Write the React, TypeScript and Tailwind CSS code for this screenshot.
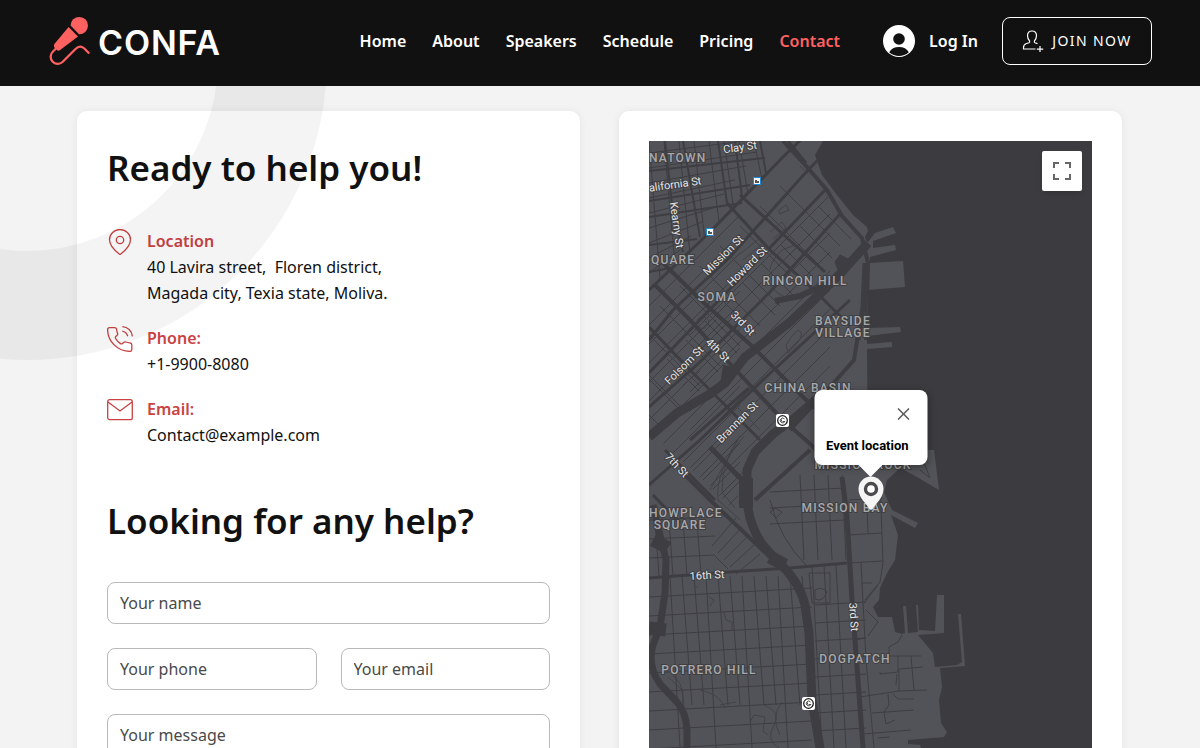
import type { ReactNode } from 'react';
import { X } from 'lucide-react';

const navLinks = ['Home', 'About', 'Speakers', 'Schedule', 'Pricing', 'Contact'];

const fieldClass =
	'w-full rounded-lg border border-[#b9b9b9] bg-white px-3 text-base text-[#333] placeholder:text-[#4a4a4a] placeholder:opacity-100 outline-none focus:border-[#111]';

export default function App() {
	return (
		<div className="relative min-h-screen overflow-hidden bg-[#f3f3f3] font-['Noto_Sans',sans-serif] text-[#111]">
			<Header />
			<main className="mx-auto grid max-w-[1110px] grid-cols-2 gap-[39px] pt-[25px] pr-[33px] pb-16 pl-8">
				<Card>
					<h1 className="text-[35px] leading-[54px] font-semibold">Ready to help you!</h1>
					<div className="mt-[33px] flex flex-col gap-[19px]">
						<ContactItem icon={<PinIcon />} title="Location">
							<p>
								40 Lavira street,&nbsp; Floren district,
								<br />
								Magada city, Texia state, Moliva.
							</p>
						</ContactItem>
						<ContactItem icon={<PhoneIcon />} title="Phone:">
							<a href="tel:+199008080">+1-9900-8080</a>
						</ContactItem>
						<ContactItem icon={<MailIcon />} title="Email:">
							<a href="mailto:Contact@example.com">Contact@example.com</a>
						</ContactItem>
					</div>
					<h2 className="mt-[46px] text-[35px] leading-[54px] font-semibold">Looking for any help?</h2>
					<form className="mt-[34px] grid grid-cols-2 gap-6">
						<input aria-label="Your name" placeholder="Your name" className={`${fieldClass} col-span-2 h-[42px]`} />
						<input aria-label="Your phone" type="tel" placeholder="Your phone" className={`${fieldClass} h-[42px]`} />
						<input aria-label="Your email" type="email" placeholder="Your email" className={`${fieldClass} h-[42px]`} />
						<textarea
							aria-label="Your message"
							placeholder="Your message"
							className={`${fieldClass} col-span-2 h-[120px] resize-none py-2`}
						/>
					</form>
				</Card>
				<Card>
					<EventMap />
				</Card>
			</main>
			{/* big decorative ring, tints both the page and the card */}
			<div className="pointer-events-none absolute top-[-240px] left-[-273px] size-[600px] rounded-full border-[109px] border-black/[0.045]" />
		</div>
	);
}

const Header = () => {
	return (
		<header className="relative z-10 flex h-[86px] items-center bg-[#111] pr-12 pl-[49px] text-white">
			<a href="#home" className="mb-1 flex items-center gap-2">
				<MicIcon />
				<span className="mt-1 font-['Inter',sans-serif] text-[34px] leading-10 font-semibold tracking-wide">CONFA</span>
			</a>
			<nav className="mr-[43px] mb-1 ml-auto flex gap-[26px] text-base font-semibold">
				{navLinks.map((link) => (
					<a key={link} href={'#' + link.toLowerCase()} className={link === 'Contact' ? 'text-[#ff6161]' : ''}>
						{link}
					</a>
				))}
			</nav>
			<button className="mr-6 mb-1 flex items-center gap-3.5 text-base font-semibold">
				<AvatarIcon />
				Log In
			</button>
			<button className="mb-1 flex h-12 w-[150px] items-center justify-center gap-2 rounded-lg border border-white text-sm tracking-widest">
				<AddUserIcon />
				JOIN NOW
			</button>
		</header>
	);
};

const Card = ({ children }: { children: ReactNode }) => {
	return (
		<section className="rounded-[10px] bg-white p-[30px] shadow-[0_0_8px_rgba(0,0,0,0.06)]">{children}</section>
	);
};

const ContactItem = ({ icon, title, children }: { icon: ReactNode; title: string; children: ReactNode }) => {
	return (
		<div className="flex gap-3.5 leading-[26px]">
			<span className="mt-px text-[#c94343]">{icon}</span>
			<div>
				<h3 className="font-semibold text-[#c94343]">{title}</h3>
				{children}
			</div>
		</div>
	);
};

/* ---------- map ---------- */

const LAND =
	'M649 141H823L815 155L822 175L837 195L853 215L860 221L867 227L868 231L865 237L867 243L875 233L893 227L896 233L873 241V248L895 245L896 250L870 257L869 263L903 261L905 287L867 290L868 328L900 327L901 332L867 336V344L892 342V347L867 349L868 455L910 465L927 450H934L939 490L917 477L900 468L887 480L884 492L892 510L918 523L915 528L891 515L898 535L895 560L887 573L880 588L879 600L873 607L878 617H892L895 632L902 634L905 633L903 606H906L908 633L918 632L916 605H918L919 630L935 631L937 595H944V633L918 635L933 653L935 667L957 665L962 662L958 614H961L965 666L940 668L942 687L939 700L941 723L947 732L944 737L908 740V744L920 745L930 770V841H649Z';

// width / path pairs
const ROADS: [number, string][] = [
	[9, 'M649 437L677 413L710 394L725 383L745 357L790 322L810 303L840 274L868 243'],
	[9, 'M818 398L797 416L773 434L755 452L747 470V500Q749 525 762 544L776 560Q799 580 805 605L809 633L812 700L820 748L826 790'],
	[7, 'M653 505L660 535L666 560L665 593L660 627L653 645Q647 665 660 684L677 702Q686 712 687 730V790'],
	[14, 'M746 478V508M722 372L734 374'],
	[13, 'M653 540L668 548M649 628L666 630M770 557L785 565'],
	[6, 'M775 301L800 296L824 285'],
	[5, 'M710 447L744 482M842 477L847 517L852 600L857 667L863 748L866 790M865 263L863 307L858 340'],
	[4, 'M783 141L807 167L827 190L842 216L862 238L868 263L866 340M858 335L854 360L830 387L790 430M755 500L810 450M813 450L840 424'],
	[4, 'M655 285L690 320L733 367L783 420L817 450M662 262L704 303L753 347L803 397L820 413'],
	[3, 'M649 290L710 232L783 157L808 133M649 340L673 310L728 259L808 170L825 153M649 373L692 328L760 258L827 188M649 407L700 362L770 292L840 214'],
	[3, 'M727 203L770 250L817 293L850 326M740 195L785 236L825 272M788 141L806 163M649 578L743 571L790 568L847 563'],
	[3, 'M690 440L749 388M649 485L700 440L766 377L850 300M649 327L690 370L760 440M665 450L715 500'],
	[4, 'M680 470L710 500L773 560'],
	[3, 'M653 495L680 523'],
	[2, 'M665 141L672 204L683 252M683 141L700 237M718 141L727 203M735 141L742 197M760 141L766 173M649 171L765 158M649 201L750 185M649 217L742 203M649 272L670 268M649 245L697 239'],
];

// small streets, each group drawn as evenly spaced lines between two edges
const range = (n: number) => Array.from({ length: n }, (_, i) => i);
const seg = (x1: number, y1: number, x2: number, y2: number) => `M${x1} ${y1}L${x2} ${y2}`;

const CHINATOWN = [
	...range(8).map((i) => seg(649 + i * 15, 141, 661 + i * 15, 290 - i * 13)),
	...range(9).map((i) => seg(649, 153 + i * 15, 768 - i * 11, 138 + i * 14)),
].join('');

const SOMA = [
	...range(24).map((i) => seg(820 - i * 20, 146 + i * 20, 880 - i * 20, 206 + i * 20)),
	...range(15).map((i) => seg(640, 315 + i * 19, 740, 215 + i * 19)),
	...range(14).map((i) => seg(690, 335 + i * 19, 830, 195 + i * 19)),
	...range(10).map((i) => seg(648 + i * 19, 378 - i * 19, 680 + i * 19, 410 - i * 19)),
].join('');

const POTRERO = [
	...range(12).map((i) => seg(670 + i * 12, 576, 680 + i * 12, i % 3 ? 705 : 748)),
	...range(9).map((i) => seg(649, 597 + i * 19, 812, 588 + i * 19)),
	...range(4).map((i) => seg(655 + i * 14, 520, 659 + i * 14, 576)),
	...range(3).map((i) => seg(649, 520 + i * 19, 715, 517 + i * 19)),
	...range(5).map((i) => seg(712 + i * 6, 546 + i * 7, 736 + i * 6, 518 + i * 9)),
	'M715 556L728 569',
].join('');

const DOGPATCH = [
	...range(3).map((i) => seg(812 + i * 12, 565, 822 + i * 12, 748)),
	...range(8).map((i) => seg(815, 605 + i * 18, 866, 602 + i * 18)),
	...range(3).map((i) => seg(770, 492 + i * 16, 845, 488 + i * 16)),
	...range(4).map((i) => seg(800 + i * 14, 475, 804 + i * 14, 560)),
	'M848 535L882 533M848 563L883 561M861 563L866 660L874 748M880 480L883 563L880 582L865 600M849 500L882 498M866 480L868 533M862 583H872M866 610L878 622L868 636M855 640L866 638',
	'M890 656H921M880 672V674L898 672V656M911 656L914 691M899 669V691L927 690M899 669L923 667M897 674L896 685M860 697L899 691M872 713L914 710M863 734L911 730M888 694L889 705L884 712L886 724L895 720M893 694L898 699H914M878 738L890 737M902 635L898 642L889 647V657',
	'M770 500Q780 540 806 565M775 508L782 512L776 518L770 512ZM809 573H830V603H812ZM815 590Q822 586 827 592Q823 603 815 599ZM864 603L878 585',
].join('');

const DETAILS =
	'M779 210L786 205L789 210L780 214ZM770 232L782 222L786 228L773 239M740 254L760 238L763 243L743 260M697 320Q703 313 709 321Q706 332 698 327M702 334L716 320M786 345Q790 337 798 330Q805 333 798 342L788 353ZM674 372L690 357M683 385L700 371M770 270Q770 262 782 250L795 245M765 275Q775 300 797 298M744 436Q715 470 718 500L740 520M740 436Q722 460 722 492L735 508M738 440L710 490M730 400L760 430M750 722L754 715L765 717L763 731L768 735M764 705Q782 712 774 725Q765 740 779 748M782 702Q770 717 780 735M700 690Q720 694 725 708M668 677L682 690L684 705M663 690L678 700M673 675Q689 690 680 710M724 612L726 620L732 622V630M710 606L714 600L709 597M695 586L698 588M720 705L736 702';

const areaLabels: [string, number, number, 'start' | 'middle'][] = [
	['NATOWN', 649, 162, 'start'],
	['QUARE', 651, 264, 'start'],
	['SOMA', 717, 301, 'middle'],
	['RINCON HILL', 805, 285, 'middle'],
	['BAYSIDE', 843, 325, 'middle'],
	['VILLAGE', 843, 337, 'middle'],
	['CHINA BASIN', 808, 392, 'middle'],
	['MISSION ROCK', 863, 469, 'middle'],
	['MISSION BAY', 845, 512, 'middle'],
	['HOWPLACE', 649, 517, 'start'],
	['SQUARE', 680, 529, 'middle'],
	['POTRERO HILL', 709, 674, 'middle'],
	['DOGPATCH', 855, 663, 'middle'],
];

// text, centre x, centre y, angle
const streetLabels: [string, number, number, number][] = [
	['Clay St', 740, 147, -8],
	['alifornia St', 675, 184, -8],
	['Kearny St', 677, 225, 82],
	['Mission St', 723, 255, -45],
	['Howard St', 747, 266, -45],
	['3rd St', 743, 323, 45],
	['4th St', 718, 350, 45],
	['Folsom St', 684, 365, -45],
	['Brannan St', 737, 422, -45],
	['7th St', 677, 465, 47],
	['16th St', 707, 575, -3],
	['3rd St', 854, 617, 86],
];

const EventMap = () => {
	return (
		<div className="relative h-full min-h-[640px] overflow-hidden bg-[#3c3c40] font-['Roboto',sans-serif]">
			<svg
				className="absolute inset-0 h-[700px] w-full"
				viewBox="649 141 443 700"
				preserveAspectRatio="xMidYMin slice"
				role="img"
				aria-label="Map"
			>
				<defs>
					<clipPath id="land">
						<path d={LAND} />
					</clipPath>
					<clipPath id="chinatown">
						<path d="M649 141H783V157L655 285H649Z" />
					</clipPath>
					<clipPath id="soma">
						<path d="M788 152L862 235L866 340L815 395L765 433L742 480L735 510L649 430V292Z" />
					</clipPath>
				</defs>
				<path d={LAND} fill="#525358" />
				<g clipPath="url(#land)" fill="none" stroke="#3e3e42">
					<path d={CHINATOWN} clipPath="url(#chinatown)" />
					<path d={SOMA} clipPath="url(#soma)" />
					<path d={POTRERO + DOGPATCH} />
					<path d={DETAILS} strokeWidth="0.8" />
					{ROADS.map(([width, d]) => (
						<path key={d} d={d} strokeWidth={width} strokeLinejoin="round" />
					))}
					<path d="M835 262L840 255L850 260L848 268L838 270Z" fill="#3e3e42" />
					<path d="M921 455L930 478L920 470" />
				</g>
				<g
					fontSize="12"
					fontWeight="500"
					fill="#a9a9ab"
					stroke="#3f3f43"
					strokeWidth="2"
					paintOrder="stroke"
					className="tracking-widest"
				>
					{areaLabels.map(([text, x, y, anchor]) => (
						<text key={text} x={x} y={y} textAnchor={anchor}>
							{text}
						</text>
					))}
				</g>
				<g fontSize="11" fill="#e6e6e6" stroke="#3f3f43" strokeWidth="2" paintOrder="stroke" textAnchor="middle">
					{streetLabels.map(([text, x, y, angle]) => (
						<text key={text + x} x={x} y={y + 4} transform={`rotate(${angle} ${x} ${y})`}>
							{text}
						</text>
					))}
				</g>
				{[
					[757, 181],
					[710, 232],
				].map(([x, y]) => (
					<g key={x}>
						<rect x={x - 3.5} y={y - 3.5} width="7" height="7" fill="#f4f4f4" stroke="#1e88d2" />
						<path d={`M${x - 2} ${y - 1}h2v1h2v2h-4z`} fill="#555" />
					</g>
				))}
				{[
					[782.5, 420.5],
					[808.5, 703.5],
				].map(([x, y]) => (
					<g key={x} fill="none" stroke="#222">
						<rect x={x - 6.5} y={y - 6.5} width="13" height="13" rx="2" fill="#fff" stroke="none" />
						<circle cx={x} cy={y} r="4.8" strokeWidth="1.3" />
						<path d={`M${x + 2} ${y - 1.6}a2.4 2.4 0 1 0 0.4 2.6h-2.4M${x - 1} ${y - 1}v2`} strokeWidth="0.8" />
					</g>
				))}
				{/* event pin */}
				<path
					d="M871 476.500C864 476.500 858.500 482 858.500 489C858.500 498 867 504 869 508.500Q871 511 873 508.500C875 504 883.500 498 883.500 489C883.500 482 878 476.500 871 476.500Z"
					fill="#f5f5f5"
				/>
				<circle cx="871" cy="489" r="5.500" fill="#fff" stroke="#4a4a4e" strokeWidth="3.400" />
			</svg>
			<div className="absolute top-[249px] left-1/2 h-[75px] w-[113px] -translate-x-1/2 rounded-lg bg-white px-3 pt-[14px] text-black shadow-[0_2px_7px_1px_rgba(0,0,0,0.3)]">
				<button aria-label="Close" className="mr-[2px] ml-auto block text-[#5f5f5f]">
					<X size={20} strokeWidth={2} />
				</button>
				<p className="mt-[13px] text-[13px] leading-[18px] font-bold whitespace-nowrap">Event location</p>
				<svg className="absolute top-full left-1/2 -translate-x-1/2" width="24" height="12" viewBox="0 0 24 12" fill="#fff">
					<path d="M0 0H24L12 12Z" />
				</svg>
			</div>
			<button
				aria-label="Toggle fullscreen view"
				className="absolute top-2.5 right-2.5 flex size-10 items-center justify-center rounded-xs bg-white shadow-md"
			>
				<svg width="18" height="18" viewBox="0 0 18 18" fill="#666">
					<path d="M0 0v6h2V2h4V0H0zm16 0h-4v2h4v4h2V0h-2zm0 16h-4v2h6v-6h-2v4zM2 12H0v6h6v-2H2v-4z" />
				</svg>
			</button>
		</div>
	);
};

/* ---------- icons ---------- */

const MicIcon = () => {
	return (
		<svg width="41" height="50" viewBox="0 0 41 50" fill="#ff6161">
			<path d="M21.600 9.500A8.700 8.700 0 1 1 30 18.300L21.600 9.500Z" />
			<path d="M19.600 11L29 20.400L10.500 34.600L8.800 34.800L5 31V28.500L19.600 11Z" />
			<path
				d="M7 32.500L4 35.500A7 7 0 0 0 13.500 46L26.500 33Q30 29.500 33.500 31.300Q35 32 39.500 36.800"
				fill="none"
				stroke="#ff6161"
				strokeWidth="2.300"
				strokeLinecap="round"
			/>
		</svg>
	);
};

const AvatarIcon = () => {
	return (
		<svg width="32" height="32" viewBox="0 0 32 32">
			<circle cx="16" cy="16" r="16" fill="#fff" />
			<circle cx="16" cy="14" r="5.800" fill="#111" />
			<path d="M6.200 27.200Q9 22 16 22T25.800 27.200Q21.500 31 16 31T6.200 27.200Z" fill="#111" />
		</svg>
	);
};

const AddUserIcon = () => {
	return (
		<svg width="22" height="22" viewBox="0 0 22 22" fill="none" stroke="#fff" strokeWidth="1.200">
			<path d="M13.500 19H1.500V17.500Q1.500 14.500 4.500 13.500L7 12.700Q8 12.200 7.600 11Q5.500 9 5.500 5.500Q5.700 1 10 1T14.500 5.500Q14.500 9 12.400 11Q12 12.200 13 12.700L15.500 13.600" />
			<path d="M18 16V22.500M14.800 19.200H21.200" />
		</svg>
	);
};

const PinIcon = () => {
	return (
		<svg width="26" height="26" viewBox="0 0 26 26" fill="none" stroke="currentColor" strokeWidth="1.300">
			<path d="M13 25.500C10.500 23.500 2.500 18 2.500 10.700A10.500 10.200 0 0 1 23.500 10.700C23.500 18 15.500 23.500 13 25.500Z" />
			<circle cx="13" cy="11" r="3.700" />
		</svg>
	);
};

const PhoneIcon = () => {
	return (
		<svg width="26" height="26" viewBox="0 0 26 26" fill="none" stroke="currentColor" strokeWidth="1.300" strokeLinejoin="round">
			<path d="M2.600 1.700H7.500Q9.500 1.700 9.700 3.700Q9.800 5.800 10.600 7.500Q10.900 8.600 10 9.400L8.700 10.600Q8 11.500 8.600 12.500Q10.500 15.700 13.500 17.600Q14.600 18.100 15.400 17.400L16.900 16.200Q17.700 15.600 18.800 16Q20.500 16.700 22.600 16.800Q24.800 17 24.800 19V23.500Q24.800 25.400 22.800 25.400C10.500 25.200 0.800 15.500 0.600 3.700Q0.600 1.700 2.600 1.700Z" />
			<path d="M15.300 5.100Q19.500 5.800 20.800 10.300M15.300 0.700Q24 1.500 25.400 10.300" />
		</svg>
	);
};

const MailIcon = () => {
	return (
		<svg width="26" height="26" viewBox="0 0 26 26" fill="none" stroke="currentColor" strokeWidth="1.300">
			<rect x="0.700" y="2.700" width="24.600" height="20" rx="2" />
			<path d="M1 5L13 14L25 5" />
		</svg>
	);
};
